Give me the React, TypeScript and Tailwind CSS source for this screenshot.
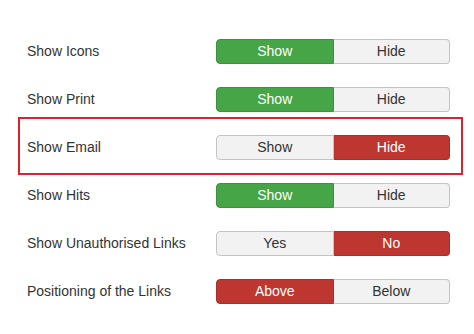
const rows = [
  { label: "Show Icons", options: ["Show", "Hide"], active: 0, tone: "green" },
  { label: "Show Print", options: ["Show", "Hide"], active: 0, tone: "green" },
  { label: "Show Email", options: ["Show", "Hide"], active: 1, tone: "red", highlight: true },
  { label: "Show Hits", options: ["Show", "Hide"], active: 0, tone: "green" },
  { label: "Show Unauthorised Links", options: ["Yes", "No"], active: 1, tone: "red" },
  { label: "Positioning of the Links", options: ["Above", "Below"], active: 0, tone: "red" },
];

function Toggle({ options, active, tone }: { options: string[]; active: number; tone: string }) {
  return (
    <div className="ml-auto flex h-[25px] w-[234px]">
      {options.map((opt, i) => {
        const on = i === active;
        const side = i === 0 ? "rounded-l-[4px]" : "rounded-r-[4px] border-l-0";
        const look = on
          ? tone === "green"
            ? "bg-[#46a546] border-[#3d913d] text-white"
            : "bg-[#bd362f] border-[#a9302a] text-white"
          : "bg-[#f2f2f2] border-[#c4c4c4] text-[#333]";
        return (
          <div key={opt} className={`flex flex-1 items-center justify-center border text-[14px] ${side} ${look}`}>
            {opt}
          </div>
        );
      })}
    </div>
  );
}

export default function App() {
  return (
    <div className="h-[334px] w-[474px] bg-white pt-[27px] pl-[18px] font-['Liberation_Sans',Arial,sans-serif] text-[#333]">
      <div className="w-[445px]">
        {rows.map((r) => (
          <div
            key={r.label}
            className={
              r.highlight
                ? "-mt-[6px] -mb-[4px] flex h-[58px] items-center border-2 border-[#e0202a] pt-[4px] pb-[2px] pl-[7px] pr-[11px]"
                : "flex h-[48px] items-center pl-[9px] pr-[13px]"
            }
          >
            <span className="text-[14px]">{r.label}</span>
            <Toggle options={r.options} active={r.active} tone={r.tone} />
          </div>
        ))}
      </div>
    </div>
  );
}
